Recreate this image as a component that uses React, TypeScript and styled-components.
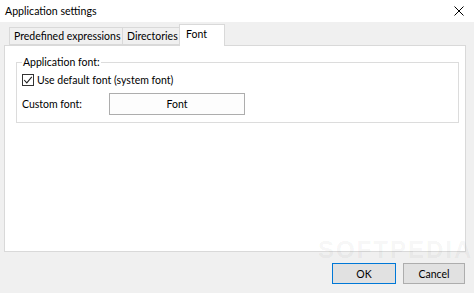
import React from "react";
import styled, { createGlobalStyle } from "styled-components";

const FONT = `"Lato", "Noto Sans", sans-serif`;

const Global = createGlobalStyle`
  html, body { margin: 0; padding: 0; background: #f0f0f0; }
  body { font-family: ${FONT}; font-size: 10.5px; color: #000; }
`;

const Window = styled.div`
  width: 474px;
  height: 293px;
  display: flex;
  flex-direction: column;
  background: #f0f0f0;
  overflow: hidden;
  position: relative;
`;

const TitleBar = styled.div`
  height: 22px;
  background: #ffffff;
  display: flex;
  align-items: center;
  justify-content: space-between;
  padding-left: 5px;
  flex: none;
`;

const Title = styled.span`
  font-size: 10.6px;
`;

const CloseBtn = styled.div`
  width: 30px;
  height: 22px;
  display: flex;
  align-items: center;
  justify-content: center;
`;

const Body = styled.div`
  flex: 1;
  display: flex;
  flex-direction: column;
  padding: 0 8px 0 4px;
`;

const TabRow = styled.div`
  height: 23px;
  display: flex;
  align-items: flex-end;
  padding-left: 5px;
  position: relative;
  z-index: 1;
`;

const Tab = styled.div<{ $active?: boolean; $w: number }>`
  box-sizing: border-box;
  width: ${(p) => p.$w}px;
  height: ${(p) => (p.$active ? "22px" : "18px")};
  margin-bottom: ${(p) => (p.$active ? "-1px" : "0")};
  padding: ${(p) => (p.$active ? "0 0 3px 6px" : "0 0 0 4px")};
  background: ${(p) => (p.$active ? "#ffffff" : "#f0f0f0")};
  border: 1px solid #d9d9d9;
  border-bottom: ${(p) => (p.$active ? "none" : "1px solid #d9d9d9")};
  margin-left: -1px;
  display: flex;
  align-items: center;
  font-size: 10.5px;
  white-space: nowrap;
  &:first-child { margin-left: 0; }
`;

const Panel = styled.div`
  box-sizing: border-box;
  height: 207px;
  background: #ffffff;
  border: 1px solid #d9d9d9;
  padding: 9px 6px 0 11px;
`;

const Group = styled.fieldset`
  box-sizing: border-box;
  margin: 0;
  height: 68px;
  border: 1px solid #dcdcdc;
  padding: 0 0 0 5px;
  display: flex;
  flex-direction: column;
`;

const Legend = styled.legend`
  padding: 0 1px;
  margin-left: 0;
  font-size: 10.5px;
  line-height: 14px;
`;

const CheckRow = styled.label`
  display: flex;
  align-items: center;
  gap: 3px;
  height: 16px;
  margin-top: 3px;
  font-size: 10.5px;
`;

const Box = styled.span`
  box-sizing: border-box;
  width: 12px;
  height: 12px;
  border: 1px solid #333333;
  background: #fff;
  display: flex;
  align-items: center;
  justify-content: center;
`;

const FieldRow = styled.div`
  display: flex;
  align-items: center;
  margin-top: 5px;
`;

const FieldLabel = styled.span`
  width: 87px;
  font-size: 10.5px;
`;

const Button = styled.button<{ $default?: boolean; $w: number }>`
  box-sizing: border-box;
  width: ${(p) => p.$w}px;
  height: 21px;
  background: #e1e1e1;
  border: 1px solid ${(p) => (p.$default ? "#0078d7" : "#adadad")};
  font-family: ${FONT};
  font-size: 10.5px;
  color: #000;
  padding: 0;
  display: flex;
  align-items: center;
  justify-content: center;
`;

const FontButton = styled(Button)`
  height: 22px;
  background: #fdfdfd;
  border-color: #adadad;
`;

const Footer = styled.div`
  display: flex;
  justify-content: flex-end;
  gap: 7px;
  padding: 11px 1px 0 0;
`;

const Watermark = styled.div`
  position: absolute;
  left: 318px;
  top: 236px;
  font-family: "Liberation Sans", sans-serif;
  font-weight: 700;
  font-size: 24px;
  letter-spacing: 2px;
  color: rgba(0, 0, 0, 0.05);
  pointer-events: none;
`;

export default function App() {
  return (
    <>
      <Global />
      <Window>
        <TitleBar>
          <Title>Application settings</Title>
          <CloseBtn>
            <svg width="10" height="10" viewBox="0 0 10 10">
              <path d="M0.5 0.5 L9.5 9.5 M9.5 0.5 L0.5 9.5" stroke="#000" strokeWidth="1" />
            </svg>
          </CloseBtn>
        </TitleBar>
        <Body>
          <TabRow>
            <Tab $w={114}>Predefined expressions</Tab>
            <Tab $w={58}>Directories</Tab>
            <Tab $active $w={46}>Font</Tab>
          </TabRow>
          <Panel>
            <Group>
              <Legend>Application font:</Legend>
              <CheckRow>
                <Box>
                  <svg width="10" height="10" viewBox="0 0 10 10">
                    <path d="M1.2 5 L3.8 7.8 L8.8 1.8" stroke="#222" strokeWidth="1.1" fill="none" />
                  </svg>
                </Box>
                Use default font (system font)
              </CheckRow>
              <FieldRow>
                <FieldLabel>Custom font:</FieldLabel>
                <FontButton $w={136} type="button">Font</FontButton>
              </FieldRow>
            </Group>
          </Panel>
          <Footer>
            <Button $default $w={64} type="button">OK</Button>
            <Button $w={62} type="button">Cancel</Button>
          </Footer>
        </Body>
        <Watermark>SOFTPEDIA</Watermark>
      </Window>
    </>
  );
}
